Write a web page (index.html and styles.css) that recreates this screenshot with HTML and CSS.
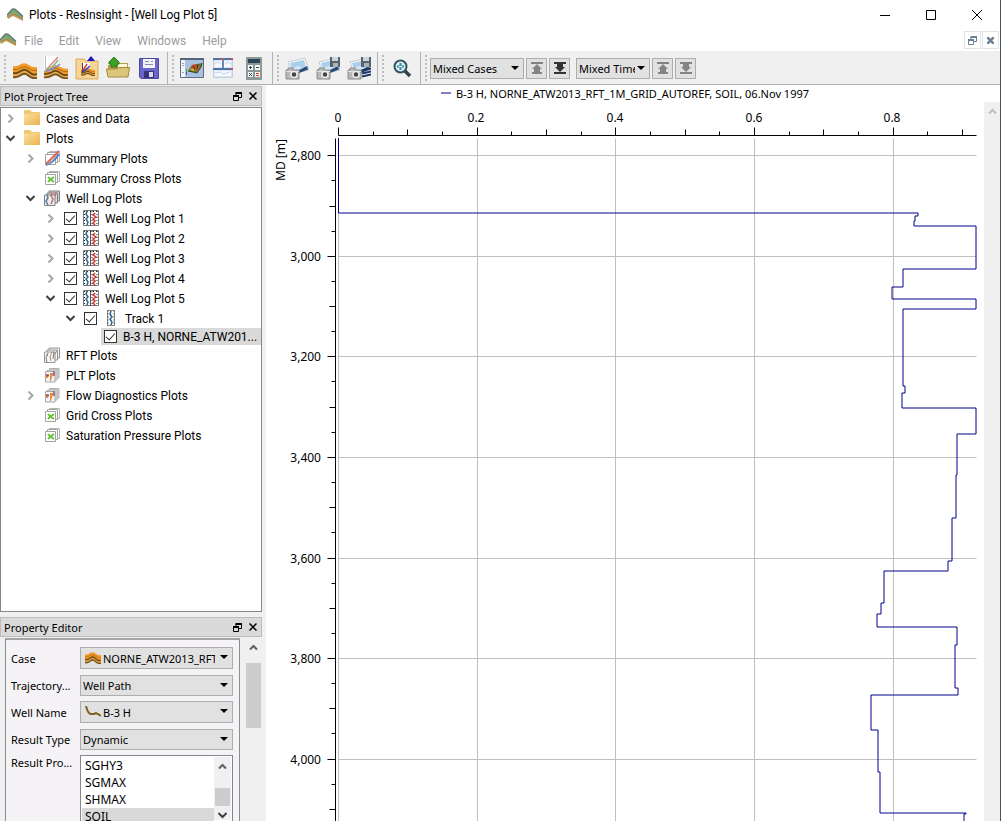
FILE: index.html
```
<!DOCTYPE html>
<html lang="en">
<head>
    <meta charset="UTF-8">
    <title>Plots - ResInsight - [Well Log Plot 5]</title>
    <link rel="stylesheet" href="styles.css">
</head>
<body>

<!-- shared icons -->
<svg class="defs" aria-hidden="true">
    <linearGradient id="folderFill" x1="0" y1="0" x2="1" y2="1">
        <stop offset="0" stop-color="#fde3a0"/>
        <stop offset="1" stop-color="#eab04e"/>
    </linearGradient>
    <symbol id="logo" viewBox="0 0 17 14">
        <path d="M0 8 L5 5 L9 5 L16 10 V13 L10 10 L6 8 L1 11 Z" fill="#c39b52"/>
        <path d="M0 7 L5 1 Q7 0 9 2 L16 8 V10 L9 6 L5 5 L0 8 Z" fill="#6fae74"/>
        <path d="M0 7 L5 1.500 Q7 .5 9 2 L16 8.500" fill="none" stroke="#6b7573" stroke-width="1.500"/>
        <path d="M0 9 L5 6 L9 7 L16 11" fill="none" stroke="#9a8558"/>
    </symbol>
    <symbol id="layers" viewBox="0 0 24 16" preserveAspectRatio="none">
        <path d="M0 3 Q4 4 8 1 Q12 -1 16 2 Q20 5 24 4 V15 Q20 17 15 13 Q11 10 8 12 Q4 15 0 14 Z" fill="#f09a2a"/>
        <path d="M0 6.500 Q4 7.500 8 4.500 Q12 2.500 16 5.500 Q20 8.500 24 7.500" fill="none" stroke="#b8690f"/>
        <path d="M0 10 Q4 11 8 8 Q12 5 16 9 Q20 13 24 11" fill="none" stroke="#6e4a12" stroke-width="2"/>
        <path d="M0 12 Q4 13 8 10 Q12 7 16 11 Q20 15 24 13" fill="none" stroke="#d9b877" stroke-width="1"/>
        <path d="M0 14 Q4 15 8 12 Q12 9 16 13 Q20 16 24 15" fill="none" stroke="#76541c" stroke-width="2"/>
    </symbol>
    <symbol id="folder" viewBox="0 0 16 16">
        <path d="M0 1 Q0 0 1 0 H6 L8 2 H15 Q16 2 16 3 V14 Q16 15 15 15 H1 Q0 15 0 14 Z" fill="#f0c871"/>
        <path d="M0 4 H7 L8 3 H16 V14 Q16 15 15 15 H1 Q0 15 0 14 Z" fill="url(#folderFill)"/>
    </symbol>
    <symbol id="pages" viewBox="0 0 16 16">
        <path d="M5.500 1.500 H15.500 V11.500 H5.500 Z" fill="#fff" stroke="#b5b5b5"/>
        <path d="M3.500 2.500 H13.500 V12.500 H3.500 Z" fill="#fff" stroke="#a2a2a2"/>
        <path d="M1.500 4.500 H11.500 V14.500 H1.500 Z" fill="#fff" stroke="#a2a2a2"/>
    </symbol>
    <symbol id="summary" viewBox="0 0 16 16">
        <use href="#pages" width="16" height="16"/>
        <path d="M2 14 L15 1" stroke="#e0645d" stroke-width="2"/>
        <path d="M2 15 Q9 13 15 4" fill="none" stroke="#5b70d8" stroke-width="2"/>
        <path d="M3 15 Q8 12 13 5" fill="none" stroke="#8cc07c" stroke-width="1"/>
    </symbol>
    <symbol id="cross" viewBox="0 0 16 16">
        <use href="#pages" width="16" height="16"/>
        <path d="M4 7 Q6 9.500 10 12 M4 12 Q6 9.500 10 7" fill="none" stroke="#62c02e" stroke-width="2"/>
    </symbol>
    <symbol id="logs" viewBox="0 0 16 16">
        <path d="M5 1 H15.500 V11 H5 Z" fill="#d0d0d0" stroke="#808080"/>
        <path d="M3 3 H13.500 V13 H3 Z" fill="#dcdcdc" stroke="#808080"/>
        <path d="M.5 5 H11 V15.500 H.5 Z" fill="#eee" stroke="#808080"/>
        <path d="M3 5 L4 8 L2 11 L4 15" fill="none" stroke="#5a7c9e" stroke-width="1.500"/>
        <path d="M8 3 L7 6 L9 9 L7 14 M12 2 L11 6" fill="none" stroke="#c0726f" stroke-width="1.500"/>
    </symbol>
    <symbol id="rft" viewBox="0 0 16 16">
        <path d="M5 1 H15.500 V11 H5 Z" fill="#f4f4f4" stroke="#949494"/>
        <path d="M3 3 H13.500 V13 H3 Z" fill="#f4f4f4" stroke="#949494"/>
        <path d="M.5 5 H11 V15.500 H.5 Z" fill="#f8f8f8" stroke="#949494"/>
        <path d="M8 5 L6 10 L7 14 M13 3 L11 7 M2 8 H4" fill="none" stroke="#cc7d7d"/>
        <path d="M4 6 L2 11 L3 15 M10 5 L9 12" fill="none" stroke="#628868"/>
    </symbol>
    <symbol id="plt" viewBox="0 0 16 16">
        <path d="M5.500 1.500 H15 V11 H5.500 Z" fill="#d6d6d6" stroke="#b0b0b0"/>
        <path d="M3.500 3 H13 V13 H3.500 Z" fill="#e2e2e2" stroke="#b0b0b0"/>
        <path d="M1.500 4.500 H11 V15 H1.500 Z" fill="#f4f4f4" stroke="#a6a6a6"/>
        <path d="M2 7 H5 L4 11 H2 Z M6 6 H10 L8 10 L7 14 H6 Z" fill="#e78c3b"/>
        <path d="M2 8.500 H5 M10 4 V9" stroke="#8b5a7c" stroke-width="1.500"/>
    </symbol>
    <symbol id="track" viewBox="0 0 8 16">
        <path d="M.5 .5 H7.500 V15.500 H.5 Z" fill="#fff" stroke="#8f8f8f"/>
        <path d="M1 .5 V16 M7 .5 V16" stroke="#222" stroke-dasharray="1 2"/>
        <path d="M4 1 L3 4 L5 7 L3 9 L5 12 L4 15" fill="none" stroke="#2f628e" stroke-width="1.500"/>
    </symbol>
    <symbol id="wellplot" viewBox="0 0 16 16">
        <path d="M.5 .5 H15.500 V15.500 H.5 Z" fill="#fff" stroke="#777"/>
        <path d="M7.500 0 V16" stroke="#555"/>
        <path d="M1.500 1 V16 M9 1 V16 M14 1 V16 M1 1.500 H15" stroke="#222" stroke-dasharray="1 2"/>
        <path d="M4 1 L3 4 L5 7 L3 9 L5 12 L4 15" fill="none" stroke="#2f628e" stroke-width="1.500"/>
        <path d="M12 3 L10 5 L13 7 L10 9 L12 11 L10 13 L12 15" fill="none" stroke="#cc3330" stroke-width="1.500"/>
    </symbol>
    <symbol id="float" viewBox="0 0 9 9">
        <path d="M3 1 H8.500 V5.500 H6 M3 1 V3" fill="none" stroke="currentColor"/>
        <path d="M2.500 1 H9" stroke="currentColor" stroke-width="2"/>
        <path d="M.5 4 V8.500 H5.500 V4" fill="none" stroke="currentColor"/>
        <path d="M0 4 H6" stroke="currentColor" stroke-width="2"/>
    </symbol>
    <symbol id="close" viewBox="0 0 8 8">
        <path d="M.5 .5 L7.500 7.500 M7.500 .5 L.5 7.500" stroke="currentColor" stroke-width="1.500"/>
    </symbol>
    <symbol id="right" viewBox="0 0 9 9">
        <path d="M2.500 .5 L6.500 4.500 L2.500 8.500" fill="none" stroke="#a6a6a6" stroke-width="2"/>
    </symbol>
    <symbol id="down" viewBox="0 0 9 9">
        <path d="M.5 2 L4.500 6 L8.500 2" fill="none" stroke="#404040" stroke-width="2"/>
    </symbol>
    <symbol id="up" viewBox="0 0 9 9">
        <path d="M1 6.500 L4.500 3 L8 6.500" fill="none" stroke="currentColor" stroke-width="2"/>
    </symbol>
    <symbol id="camera" viewBox="0 0 24 24">
        <path d="M3 6 L20 2 L24 14 L7 18 Z" fill="#f7fafc" stroke="#c3ccd4"/>
        <path d="M5 7 L19 4 L21 11 L7 14 Z" fill="#a9cfea"/>
        <path d="M8 13 Q12 8 15 11 T21 8 L22 13 L9 15 Z" fill="#d6e7f1"/>
        <path d="M12 15 L22 10 L23 13.500 L14 17 Z" fill="#234a78"/>
        <path d="M1 14 H3 V12 H8 V14 H14 V23 H1 Z" fill="#b9b9b9" stroke="#8a8a8a"/>
        <path d="M1 15.500 H14" stroke="#e2e2e2"/>
        <circle cx="9" cy="18.500" r="3" fill="#444" stroke="#eee" stroke-width="1.500"/>
    </symbol>
    <symbol id="disk" viewBox="0 0 10 10">
        <path d="M0 0 H10 V10 H0 Z" fill="#59636c"/>
        <path d="M2 0 H8 V4 H2 Z" fill="#cfd6db"/>
        <path d="M3 6 H8 V10 H3 Z" fill="#a9b3ba"/>
    </symbol>
    <symbol id="prev" viewBox="0 0 14 14">
        <path d="M1 1 H13 V3 H1 Z M7 3 L12 8 H9 V11 H12 V13 H2 V11 H5 V8 H2 Z" fill="currentColor"/>
        <path d="M4 6 H10 V12 H4 Z" fill="currentColor"/>
    </symbol>
    <symbol id="next" viewBox="0 0 14 14">
        <path d="M1 11 H13 V13 H1 Z M1 1 H13 V3 H10 V6 H12 L7 11 L2 6 H4 V3 H1 Z" fill="currentColor"/>
    </symbol>
</svg>

<div class="window">

    <header class="titlebar">
        <svg class="logo"><use href="#logo"/></svg>
        <h1>Plots - ResInsight - [Well Log Plot 5]</h1>
        <div class="win_buttons">
            <button type="button" aria-label="Minimize"><svg width="10" height="10"><path d="M0 5.500 H10" stroke="#000"/></svg></button>
            <button type="button" aria-label="Maximize"><svg width="10" height="10"><path d="M.5 .5 H9.500 V9.500 H.5 Z" fill="none" stroke="#000"/></svg></button>
            <button type="button" aria-label="Close"><svg width="10" height="10"><path d="M0 0 L10 10 M10 0 L0 10" stroke="#000"/></svg></button>
        </div>
    </header>

    <nav class="menubar">
        <svg class="logo"><use href="#logo"/></svg>
        <button type="button">File</button>
        <button type="button">Edit</button>
        <button type="button">View</button>
        <button type="button">Windows</button>
        <button type="button">Help</button>
        <div class="mdi_buttons">
            <button type="button" aria-label="Restore"><svg width="9" height="9"><use href="#float"/></svg></button>
            <button type="button" aria-label="Close plot"><svg width="7" height="7" viewBox="0 0 7 7"><path d="M0 0 L7 7 M7 0 L0 7" stroke="currentColor" stroke-width="2.500"/></svg></button>
        </div>
    </nav>

    <div class="toolbar">
        <div class="tool_group">
            <button type="button" aria-label="Import Eclipse case"><svg width="24" height="24" viewBox="0 0 24 24"><use href="#layers" y="7" width="24" height="16"/></svg></button>
            <button type="button" aria-label="Import summary case"><svg width="24" height="24" viewBox="0 0 24 24">
                <path d="M0 0 H15 V15 H0 Z" fill="#fff"/>
                <use href="#layers" y="9" width="24" height="14"/>
                <path d="M0 0 H15 L8 11 L0 15 Z" fill="#fff"/>
                <path d="M1.500 0 V15 H8" fill="none" stroke="#bbb"/>
                <path d="M2 14 L14 1" stroke="#e58080" stroke-width="1.500"/>
                <path d="M2 14 Q9 12 14 4" fill="none" stroke="#7fc07f" stroke-width="1.500"/>
                <path d="M2 15 Q9 14 16 8" fill="none" stroke="#7584dc" stroke-width="1.500"/>
            </svg></button>
            <button type="button" aria-label="Import observed data"><svg width="24" height="24" viewBox="0 0 24 24">
                <path d="M1 3 H9 L11 5 H23 V23 H1 Z" fill="#f6d596" stroke="#d9ab58"/>
                <path d="M12 5 L16 0 L20 5 Z" fill="#1616c4"/>
                <path d="M7 7 H15 V17 H7 Z" fill="#fff"/>
                <use href="#layers" x="6" y="12" width="14" height="8"/>
                <path d="M7 16 L12 8" stroke="#d33" stroke-width="1.500"/>
                <path d="M8 16 L15 10" stroke="#2246c4" stroke-width="1.500"/>
                <path d="M7.500 7 V17" stroke="#444"/>
            </svg></button>
            <button type="button" aria-label="Open project"><svg width="24" height="24" viewBox="0 0 24 24">
                <path d="M2 9 H10 L12 7 H22 V20 H2 Z" fill="#b99f4a"/>
                <path d="M12 8 H21 V14 H12 Z" fill="#fff9dc"/>
                <path d="M0.500 13 H11 L13 11.500 H23.500 L22 21 H2 Z" fill="#dac77c" stroke="#a58b38"/>
                <path d="M8 1 L13 6 V8 H11 V11 H5 V8 H3 V6 Z" fill="#3f9f27" stroke="#2b7918"/>
            </svg></button>
            <button type="button" aria-label="Save project"><svg width="24" height="24" viewBox="0 0 24 24">
                <path d="M2.500 2.500 H21.500 V22.500 H4 L2.500 21 Z" fill="#6a66c9" stroke="#4c49a1"/>
                <path d="M6 3 H18 V12 H6 Z" fill="#f2f2fb"/>
                <path d="M8 5.500 H12 M14 5.500 H16 M8 8.500 H16" stroke="#8b8ba2"/>
                <path d="M7 15 H17 V22 H7 Z" fill="#343477"/>
                <path d="M12 16 H16 V21 H12 Z" fill="#d8d8ea"/>
            </svg></button>
        </div>
        <div class="tool_group">
            <button type="button" aria-label="Open 3D window"><svg width="24" height="24" viewBox="0 0 24 24">
                <path d="M.5 2.500 H23.500 V21.500 H.5 Z" fill="#a9c1df" stroke="#5e6d82"/>
                <path d="M0 3 H24" stroke="#56647b" stroke-width="2"/>
                <path d="M1 4 H5 V21 H1 Z" fill="#f4f4f4"/>
                <path d="M2 7.500 H4 M2 9.500 H4 M2 16.500 H4" stroke="#9aa4b0"/>
                <path d="M6.500 13 V16" stroke="#3fae4f"/>
                <path d="M6.500 16 V19" stroke="#3558d0"/>
                <path d="M8 15 L12 9 L22 7 L21 11 L17 17 L13 16 Z" fill="#6b7a2c"/>
                <path d="M12 9 L17 8 L16 12 L11 13 Z" fill="#d0402a"/>
                <path d="M15 12 L20 11 L17 16 Z" fill="#cf5a2a"/>
                <path d="M10 13 L14 12 L15 15 L12 15 Z" fill="#d9a02b"/>
                <path d="M8 15 L13 16 L17 17 L21 11 L22 7" fill="none" stroke="#33402a"/>
                <path d="M13 10 L15 14 M18 8 L17 13" stroke="#2b3a22"/>
            </svg></button>
            <button type="button" aria-label="Tile windows"><svg width="24" height="24" viewBox="0 0 24 24">
                <path d="M2.500 2.500 H21.500 V21.500 H2.500 Z" fill="#dbe6f5" stroke="#c0cfe4"/>
                <path d="M4 5 H11 V11 H4 Z M13 5 H20 V11 H13 Z M4 15 H20 V20 H4 Z" fill="#f6f9ff"/>
                <path d="M2 3 H22 M2 13 H22" stroke="#5274a2" stroke-width="2"/>
                <path d="M12 3 V12" stroke="#6a88b4" stroke-width="2"/>
                <path d="M4 8 L7 6 L10 8 M14 8 L17 6 L20 8 M4 17 L9 16 L12 18 L19 16" fill="none" stroke="#c3d2e8"/>
                <path d="M10 2 H12 V4 H10 Z M20 2 H22 V4 H20 Z M20 12 H22 V14 H20 Z" fill="#d94b3c"/>
            </svg></button>
            <button type="button" aria-label="Calculator"><svg width="24" height="24" viewBox="0 0 24 24">
                <rect x="4" y="1" width="16" height="23" rx="1" fill="#8c9896"/>
                <path d="M6 3 H18 V7 H6 Z" fill="#2c4257"/>
                <path d="M6 9 H11 V14 H6 Z M13 9 H18 V14 H13 Z M6 16 H11 V21 H6 Z M13 16 H18 V21 H13 Z" fill="#f4f6f6"/>
                <path d="M7 11.500 H10 M8.500 10 V13 M14 11.500 H17 M7 17 L10 20 M10 17 L7 20" stroke="#2c4257"/>
                <path d="M14 17.500 H17 M14 19.500 H17" stroke="#d33a31"/>
            </svg></button>
        </div>
        <div class="tool_group">
            <button type="button" aria-label="Snapshot to clipboard"><svg width="24" height="24"><use href="#camera"/></svg></button>
            <button type="button" aria-label="Snapshot to file"><svg width="24" height="24" viewBox="0 0 24 24"><use href="#camera" width="24" height="24"/><use href="#disk" x="14" y="1" width="10" height="10"/></svg></button>
            <button type="button" aria-label="Snapshot all views"><svg width="24" height="24" viewBox="0 0 24 24"><use href="#camera" width="24" height="24"/><use href="#disk" x="14" y="1" width="10" height="10"/><path d="M15 14.500 L24 12.500 M15 17.500 L24 15.500 M15 20.500 L24 18.500" stroke="#203a63" stroke-width="2"/></svg></button>
        </div>
        <div class="tool_group zoom_group">
            <button type="button" aria-label="Zoom all"><svg width="24" height="24" viewBox="0 0 24 24">
                <path d="M14 14 L20 20" stroke="#33424c" stroke-width="3.500"/>
                <circle cx="10.500" cy="10.500" r="6" fill="#d8edf4" stroke="#35525f" stroke-width="2"/>
                <path d="M10.500 7 V14 M7 10.500 H14" stroke="#3f8ba8" stroke-width="2"/>
                <path d="M9 10.500 H12" stroke="#fff"/>
            </svg></button>
        </div>
        <div class="tool_group step_group">
            <span class="combo cases"><select aria-label="Case"><option>Mixed Cases</option></select></span>
            <button type="button" class="step" aria-label="Previous case"><svg width="14" height="14"><use href="#prev"/></svg></button>
            <button type="button" class="step dark" aria-label="Next case"><svg width="14" height="14"><use href="#next"/></svg></button>
            <span class="combo times"><select aria-label="Time step"><option>Mixed Time</option></select></span>
            <button type="button" class="step" aria-label="Previous time step"><svg width="14" height="14"><use href="#prev"/></svg></button>
            <button type="button" class="step" aria-label="Next time step"><svg width="14" height="14"><use href="#next"/></svg></button>
        </div>
    </div>

    <div class="content">
        <aside class="docks">
            <div class="dock_title">
                <h2>Plot Project Tree</h2>
                <button type="button" aria-label="Float tree"><svg width="9" height="9"><use href="#float"/></svg></button>
                <button type="button" aria-label="Close tree"><svg width="8" height="8"><use href="#close"/></svg></button>
            </div>
            <ul class="tree">
                <li><svg class="arrow"><use href="#right"/></svg><svg class="icon"><use href="#folder"/></svg><span>Cases and Data</span></li>
                <li><svg class="arrow"><use href="#down"/></svg><svg class="icon"><use href="#folder"/></svg><span>Plots</span></li>
                <li class="level1"><svg class="arrow"><use href="#right"/></svg><svg class="icon"><use href="#summary"/></svg><span>Summary Plots</span></li>
                <li class="level1"><svg class="arrow"></svg><svg class="icon"><use href="#cross"/></svg><span>Summary Cross Plots</span></li>
                <li class="level1"><svg class="arrow"><use href="#down"/></svg><svg class="icon"><use href="#logs"/></svg><span>Well Log Plots</span></li>
                <li class="level2"><svg class="arrow"><use href="#right"/></svg><input type="checkbox" id="plot1" checked><svg class="icon"><use href="#wellplot"/></svg><label for="plot1">Well Log Plot 1</label></li>
                <li class="level2"><svg class="arrow"><use href="#right"/></svg><input type="checkbox" id="plot2" checked><svg class="icon"><use href="#wellplot"/></svg><label for="plot2">Well Log Plot 2</label></li>
                <li class="level2"><svg class="arrow"><use href="#right"/></svg><input type="checkbox" id="plot3" checked><svg class="icon"><use href="#wellplot"/></svg><label for="plot3">Well Log Plot 3</label></li>
                <li class="level2"><svg class="arrow"><use href="#right"/></svg><input type="checkbox" id="plot4" checked><svg class="icon"><use href="#wellplot"/></svg><label for="plot4">Well Log Plot 4</label></li>
                <li class="level2"><svg class="arrow"><use href="#down"/></svg><input type="checkbox" id="plot5" checked><svg class="icon"><use href="#wellplot"/></svg><label for="plot5">Well Log Plot 5</label></li>
                <li class="level3"><svg class="arrow"><use href="#down"/></svg><input type="checkbox" id="track1" checked><svg class="icon"><use href="#track"/></svg><label for="track1">Track 1</label></li>
                <li class="level4 selected"><div><input type="checkbox" id="curve1" checked><label for="curve1">B-3 H, NORNE_ATW201...</label></div></li>
                <li class="level1"><svg class="arrow"></svg><svg class="icon"><use href="#rft"/></svg><span>RFT Plots</span></li>
                <li class="level1"><svg class="arrow"></svg><svg class="icon"><use href="#plt"/></svg><span>PLT Plots</span></li>
                <li class="level1"><svg class="arrow"><use href="#right"/></svg><svg class="icon"><use href="#plt"/></svg><span>Flow Diagnostics Plots</span></li>
                <li class="level1"><svg class="arrow"></svg><svg class="icon"><use href="#cross"/></svg><span>Grid Cross Plots</span></li>
                <li class="level1"><svg class="arrow"></svg><svg class="icon"><use href="#cross"/></svg><span>Saturation Pressure Plots</span></li>
            </ul>

            <div class="dock_title">
                <h2>Property Editor</h2>
                <button type="button" aria-label="Float editor"><svg width="9" height="9"><use href="#float"/></svg></button>
                <button type="button" aria-label="Close editor"><svg width="8" height="8"><use href="#close"/></svg></button>
            </div>
            <div class="editor">
                <form class="props">
                    <label for="case">Case</label>
                    <span class="combo with_icon"><svg width="16" height="12"><use href="#layers"/></svg><select id="case"><option>NORNE_ATW2013_RFT_1M_GRID_AUTOREF</option></select></span>
                    <label for="traj">Trajectory...</label>
                    <span class="combo"><select id="traj"><option>Well Path</option></select></span>
                    <label for="well">Well Name</label>
                    <span class="combo with_icon"><svg width="16" height="12" viewBox="0 0 16 12"><path d="M1 0 Q3 8 6 8 L9 8 L11 7 L13 8 L16 10" fill="none" stroke="#80601c" stroke-width="2"/></svg><select id="well"><option>B-3 H</option></select></span>
                    <label for="type">Result Type</label>
                    <span class="combo"><select id="type"><option>Dynamic</option></select></span>
                    <label for="prop" class="top">Result Pro...</label>
                    <div class="listbox">
                        <select id="prop" size="5">
                            <option>SGHY3</option>
                            <option>SGMAX</option>
                            <option>SHMAX</option>
                            <option selected>SOIL</option>
                        </select>
                        <div class="scrollbar">
                            <svg width="9" height="9"><use href="#up"/></svg>
                            <i class="thumb"></i>
                            <svg width="9" height="9"><use href="#down"/></svg>
                        </div>
                    </div>
                </form>
                <div class="scrollbar">
                    <svg width="9" height="9"><use href="#up"/></svg>
                    <i class="thumb"></i>
                </div>
            </div>
        </aside>

        <main class="plot">
            <div class="plot_area">
                <p class="legend"><i></i>B-3 H, NORNE_ATW2013_RFT_1M_GRID_AUTOREF, SOIL, 06.Nov 1997</p>
                <svg class="chart" role="img" aria-label="SOIL by measured depth">
                    <g transform="translate(72.500 36.500)">
                        <path class="grid" d="M0 1 V900 M139 1 V900 M277 1 V900 M416 1 V900 M555 1 V900
                            M0 18 H638 M0 119 H638 M0 219 H638 M0 320 H638 M0 421 H638 M0 521 H638 M0 622 H638"/>
                        <!-- top axis: major, medium and minor ticks -->
                        <path class="axis" d="M0 -2 H638
                            M0 -2 V-10 M139 -2 V-10 M277 -2 V-10 M416 -2 V-10 M555 -2 V-10
                            M69 -2 V-8 M208 -2 V-8 M347 -2 V-8 M485 -2 V-8 M624 -2 V-8
                            M35 -2 V-6 M104 -2 V-6 M173 -2 V-6 M243 -2 V-6 M312 -2 V-6 M381 -2 V-6 M451 -2 V-6 M520 -2 V-6 M589 -2 V-6"/>
                        <!-- depth axis -->
                        <path class="axis" d="M-3 1 V900
                            M-3 18 H-11 M-3 119 H-11 M-3 219 H-11 M-3 320 H-11 M-3 421 H-11 M-3 521 H-11 M-3 622 H-11
                            M-3 69 H-9 M-3 169 H-9 M-3 270 H-9 M-3 370 H-9 M-3 471 H-9 M-3 571 H-9 M-3 672 H-9
                            M-3 43 H-7 M-3 94 H-7 M-3 144 H-7 M-3 194 H-7 M-3 244 H-7 M-3 295 H-7 M-3 345 H-7 M-3 395 H-7
                            M-3 446 H-7 M-3 496 H-7 M-3 546 H-7 M-3 596 H-7 M-3 647 H-7"/>
                    </g>
                    <g transform="translate(72 36)">
                        <path class="curve" d="M.5 1 V76 H580 V79 H577 V84 H576 V89 H638 V132 H565 V150 H554 V162 H638 V172 H565
                            V249 H567 V256 H564 V271 H638 V297 H619 V338 H618 V381 H614 V424 H610 V434 H546 V466 H543 V477 H539
                            V490 H619 V508 H617 V551 H620 V558 H533 V593 H540 V635 H542 V676 H628 V677 H626 V700"/>
                        <g class="x_labels">
                            <text x="0" y="-15">0</text>
                            <text x="138" y="-15">0.2</text>
                            <text x="277" y="-15">0.4</text>
                            <text x="416" y="-15">0.6</text>
                            <text x="554" y="-15">0.8</text>
                        </g>
                        <g class="y_labels">
                            <text x="-17" y="23">2,800</text>
                            <text x="-17" y="124">3,000</text>
                            <text x="-17" y="224">3,200</text>
                            <text x="-17" y="325">3,400</text>
                            <text x="-17" y="426">3,600</text>
                            <text x="-17" y="526">3,800</text>
                            <text x="-17" y="627">4,000</text>
                            <text transform="translate(-53 2) rotate(-90)">MD [m]</text>
                        </g>
                    </g>
                </svg>
            </div>
            <div class="scrollbar"><svg width="9" height="9"><use href="#up"/></svg></div>
        </main>
    </div>
</div>

</body>
</html>
```
FILE: styles.css
```
*{
    margin: 0;
    padding: 0;
    box-sizing: border-box;
}
body{
    font-family: "Noto Sans", "Open Sans", sans-serif;
    font-size: 12px;
    color: #000;
    background-color: #fff;
}
button{
    border: 0;
    background: none;
    font: inherit;
    color: inherit;
    display: flex;
    align-items: center;
    justify-content: center;
}
h1,h2{
    font-size: 12px;
    font-weight: normal;
}
svg{
    display: block;
    flex: none;
}
.defs{
    position: absolute;
    width: 0;
    height: 0;
}

.window{
    display: flex;
    flex-direction: column;
    height: 100vh;
    overflow: hidden;
    border-right: 1px solid #4a545e;
}
.titlebar,.menubar,.tree{
    font-family: Roboto, "Noto Sans", sans-serif;
}
.logo{
    width: 17px;
    height: 14px;
}

/* title and menu */
.titlebar{
    display: flex;
    align-items: center;
    height: 29px;
    flex: none;
    padding-left: 7px;
    gap: 5px;
}
.win_buttons{
    display: flex;
    margin-left: auto;
}
.win_buttons button{
    width: 46px;
    height: 29px;
}
.menubar{
    display: flex;
    align-items: center;
    height: 23px;
    flex: none;
    color: #9b9b9b;
    border-bottom: 1px solid #f0f0f0;
}
.menubar > button{
    padding: 2px 8px 0;
}
.menubar > .logo + button{
    padding-left: 7px;
}
.mdi_buttons{
    display: flex;
    gap: 1px;
    margin-left: auto;
    margin-right: 1px;
    color: #6d7f92;
}
.mdi_buttons button{
    width: 17px;
    height: 18px;
    border: 1px solid #e3e3e3;
}

/* toolbar */
.toolbar{
    display: flex;
    height: 33px;
    flex: none;
    background-color: #f0f0f0;
    border-bottom: 1px solid #b0b0b0;
}
.tool_group{
    display: flex;
    align-items: center;
    gap: 7px;
    padding: 0 6px 0 13px;
    border-right: 1px solid #b4b4b4;
    position: relative;
}
.tool_group + .tool_group{
    padding-left: 12px;
}
.tool_group::before{
    content: "";
    position: absolute;
    left: 4px;
    top: 3px;
    bottom: 3px;
    border-left: 2px dotted #bdbdbd;
}
.tool_group.step_group{
    padding-left: 9px;
    gap: 2px;
    border-right: 0;
}
.step{
    width: 21px;
    height: 21px;
    border: 1px solid #adadad;
    background-color: #e1e1e1;
    color: #848484;
}
.step.dark{
    color: #333;
}

/* drop-downs, shared by toolbar and editor */
.combo{
    display: block;
    position: relative;
}
.combo select{
    display: block;
    appearance: none;
    width: 100%;
    height: 21px;
    padding: 0 17px 0 2px;
    border: 1px solid #adadad;
    border-radius: 0;
    background-color: #e1e1e1;
    font: inherit;
    font-size: 11px;
    color: #000;
}
.combo::after{
    content: "";
    position: absolute;
    right: 5px;
    top: 8px;
    border: 4px solid transparent;
    border-top-color: #000;
    border-bottom: 0;
    pointer-events: none;
}
.combo.with_icon select{
    height: 22px;
    padding-left: 22px;
}
.combo.with_icon svg{
    position: absolute;
    left: 5px;
    top: 5px;
}
.cases{
    width: 94px;
}
.times{
    width: 74px;
    margin-left: 4px;
}
.times select{
    padding-right: 14px;
}

.content{
    display: flex;
    flex: 1;
    min-height: 0;
    background-color: #f0f0f0;
}

/* docks */
.docks{
    display: flex;
    flex-direction: column;
    width: 262px;
    margin-right: 4px;
    flex: none;
    padding-top: 1px;
}
.dock_title{
    display: flex;
    align-items: center;
    gap: 7px;
    height: 20px;
    flex: none;
    padding: 0 4px 0 3px;
    background-color: #dadada;
    border: 1px solid #bcbcbc;
}
.dock_title h2{
    flex: 1;
    font-size: 11px;
}
.tree{
    flex: none;
    height: 505px;
    margin: 1px 0 5px;
    list-style: none;
    background-color: #fff;
    border: 1px solid #828790;
    overflow: hidden;
}
.tree li{
    display: flex;
    align-items: center;
    gap: 6px;
    height: 20px;
    padding-left: 5px;
    white-space: nowrap;
}
.tree li > span,.tree li > label{
    padding-top: 2px;
}
.tree .level1{
    padding-left: 25px;
}
.tree .level2{
    padding-left: 45px;
}
.tree .level3{
    padding-left: 65px;
}
.tree .level4{
    height: 17px;
    padding-left: 100px;
}
.arrow{
    width: 9px;
    height: 9px;
    margin-right: 3px;
}
.icon{
    width: 16px;
    height: 16px;
}
.tree input{
    appearance: none;
    width: 13px;
    height: 13px;
    flex: none;
    border: 1px solid #333;
    background-color: #fff;
    position: relative;
}
.tree input:checked::after{
    content: "";
    position: absolute;
    left: 3px;
    top: 0;
    width: 4px;
    height: 8px;
    border: solid #333;
    border-width: 0 1px 1px 0;
    transform: rotate(42deg);
}
.selected div{
    display: flex;
    align-items: center;
    gap: 6px;
    flex: 1;
    height: 17px;
    padding-left: 3px;
    background-color: #d9d9d9;
}

/* property editor */
.editor{
    display: flex;
    flex: 1;
    min-height: 0;
    padding-top: 1px;
    padding-left: 5px;
    gap: 5px;
    overflow: hidden;
}
.props{
    display: grid;
    grid-template-columns: 62px 1fr;
    grid-template-rows: 22px 22px 22px 22px 1fr;
    align-items: center;
    gap: 5px 7px;
    flex: 1;
    min-width: 0;
    padding: 7px 6px 0 5px;
    background-color: #f5f3f5;
    border: 1px solid #8a8d93;
    border-top: 2px solid #a5a5a8;
    border-bottom: 0;
    font-size: 11px;
}
.props .top{
    align-self: start;
}
.listbox{
    display: flex;
    align-self: stretch;
    min-height: 0;
    padding: 1px;
    background-color: #fff;
    border: 1px solid #828790;
    border-bottom: 0;
    overflow: hidden;
}
/* taller than the visible part of the dock, so it never scrolls to the selected row */
.listbox select{
    flex: 1;
    height: 90px;
    min-width: 0;
    border: 0;
    outline: 0;
    overflow: hidden;
    background-color: #fff;
    font: inherit;
    font-size: 12px;
}
.listbox option{
    height: 17px;
    min-height: 17px;
    padding: 0 3px;
    line-height: 17px;
    color: #000;
}
.listbox option:checked{
    background: linear-gradient(#d9d9d9, #d9d9d9);
    color: #000;
}
.scrollbar{
    display: flex;
    flex-direction: column;
    align-items: center;
    width: 17px;
    flex: none;
    padding-top: 5px;
    background-color: #f0f0f0;
    color: #606060;
}
.thumb{
    width: 15px;
    height: 65px;
    margin-top: 11px;
    background-color: #cdcdcd;
}
.listbox .scrollbar{
    justify-content: space-between;
}
.listbox .thumb{
    height: 18px;
}

/* plot */
.plot{
    display: flex;
    flex: 1;
    min-width: 0;
    background-color: #fff;
}
.plot_area{
    display: flex;
    flex-direction: column;
    flex: 1;
    min-width: 0;
}
.legend{
    display: flex;
    align-items: center;
    justify-content: center;
    gap: 5px;
    height: 16px;
    flex: none;
    font-size: 11px;
}
.legend i{
    width: 10px;
    height: 2px;
    background-color: #8080c5;
}
.chart{
    width: 100%;
    flex: 1;
    min-height: 0;
    overflow: hidden;
    font-size: 12px;
}
.grid{
    fill: none;
    stroke: #c0c0c0;
}
.axis{
    fill: none;
    stroke: #000;
}
.curve{
    fill: none;
    stroke: #00008b;
}
.x_labels{
    text-anchor: middle;
}
.y_labels{
    text-anchor: end;
}
.plot .scrollbar{
    width: 16px;
    margin-top: 17px;
    color: #bfbfbf;
}
```
